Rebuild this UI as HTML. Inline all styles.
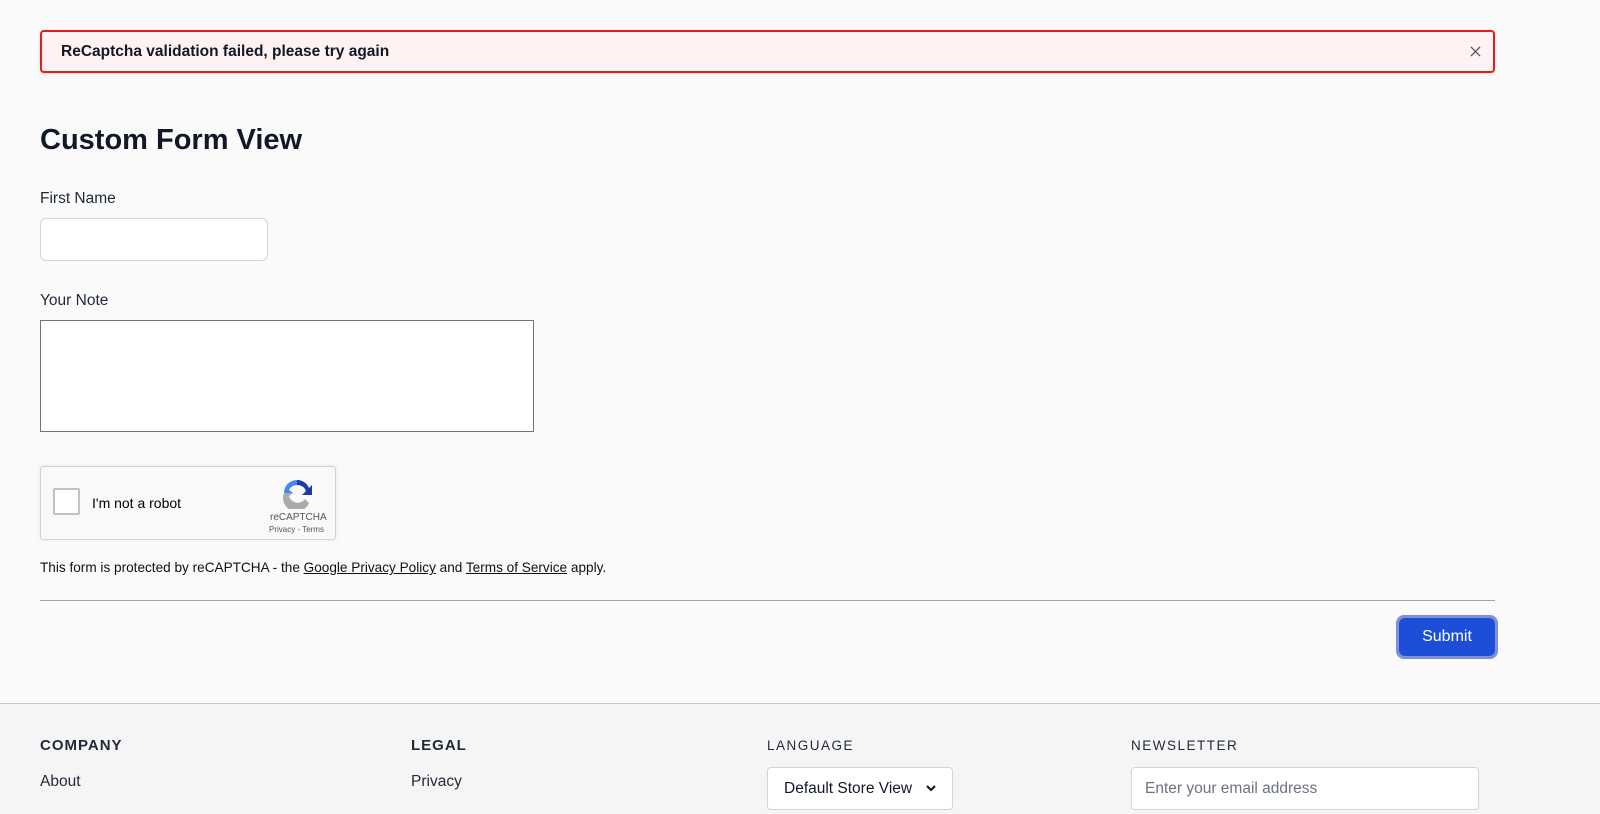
<!DOCTYPE html>
<html><head><meta charset="utf-8"><style>
*{box-sizing:border-box;margin:0;padding:0}
body{width:1600px;height:814px;overflow:hidden;background:#fafafa;font-family:"Liberation Sans",sans-serif;color:#111827;position:relative}
.a{position:absolute}
</style></head><body>
<div class="a" style="left:40px;top:30px;width:1455px;height:43px;background:#fef2f2;border:2px solid #e11d1d;border-radius:4px;box-shadow:0 1px 3px rgba(0,0,0,.15)"></div>
<div class="a" style="left:61px;top:43px;font-size:15.5px;font-weight:bold">ReCaptcha validation failed, please try again</div>
<svg class="a" style="left:1470px;top:46px" width="11" height="11" viewBox="0 0 12 12"><path d="M1 1L11 11M11 1L1 11" stroke="#4b5563" stroke-width="1.4"/></svg>
<div class="a" style="left:40px;top:124px;font-size:29px;font-weight:bold">Custom Form View</div>
<div class="a" style="left:40px;top:190px;font-size:15.5px;color:#1f2937">First Name</div>
<div class="a" style="left:40px;top:218px;width:228px;height:43px;background:#fff;border:1px solid #d1d5db;border-radius:6px"></div>
<div class="a" style="left:40px;top:292px;font-size:15.5px;color:#1f2937">Your Note</div>
<div class="a" style="left:40px;top:320px;width:494px;height:112px;background:#fff;border:1px solid #6b7280"></div>
<div class="a" style="left:40px;top:466px;width:296px;height:74px;background:#f9f9f9;border:1px solid #d3d3d3;border-radius:3px;box-shadow:0 0 4px rgba(0,0,0,.08)"></div>
<div class="a" style="left:53px;top:488px;width:27px;height:27px;background:#fff;border:2px solid #c1c1c1;border-radius:2px"></div>
<div class="a" style="left:92px;top:495px;font-size:14px;color:#000">I'm not a robot</div>
<svg class="a" style="left:281px;top:477px" width="32" height="32" viewBox="0 0 32 32"><path d="M16 3A13 13 0 0 1 28 11L31 8V18H21L25 14A9 9 0 0 0 16 8Z" fill="#1c3aa9"/><path d="M3 16A13 13 0 0 1 16 3V8A9 9 0 0 0 8 13L12 16H3Z" fill="#4285f4"/><path d="M3 16H12L8 19A9 9 0 0 0 24 22L28 26A13 13 0 0 1 3 16Z" fill="#ababab"/></svg>
<div class="a" style="left:270px;top:512px;font-size:10px;color:#555">reCAPTCHA</div>
<div class="a" style="left:269px;top:525px;font-size:8px;color:#555">Privacy - Terms</div>
<div class="a" style="left:40px;top:560px;font-size:13.6px;color:#111">This form is protected by reCAPTCHA - the <u>Google Privacy Policy</u> and <u>Terms of Service</u> apply.</div>
<div class="a" style="left:40px;top:600px;width:1455px;height:1px;background:#9ca3af"></div>
<div class="a" style="left:1396px;top:615px;width:102px;height:44px;border-radius:8px;background:#8090d8"></div>
<div class="a" style="left:1399px;top:618px;width:96px;height:38px;border-radius:6px;background:#1d4ed8;color:#fff;font-size:16px;text-align:center;line-height:38px">Submit</div>
<div class="a" style="left:0;top:703px;width:1600px;height:111px;background:#f5f5f5;border-top:1px solid #c8c8c8"></div>
<div class="a" style="left:40px;top:737px;font-size:15px;font-weight:bold;letter-spacing:1px;color:#1f2937">COMPANY</div>
<div class="a" style="left:40px;top:773px;font-size:15.5px;color:#1f2937">About</div>
<div class="a" style="left:411px;top:737px;font-size:15px;font-weight:bold;letter-spacing:1px;color:#1f2937">LEGAL</div>
<div class="a" style="left:411px;top:773px;font-size:15.5px;color:#1f2937">Privacy</div>
<div class="a" style="left:767px;top:738px;font-size:13.5px;letter-spacing:1.5px;color:#1f2937">LANGUAGE</div>
<div class="a" style="left:767px;top:767px;width:186px;height:43px;background:#fff;border:1px solid #d1d5db;border-radius:4px;font-size:15.5px;line-height:41px;padding-left:16px">Default Store View</div>
<svg class="a" style="left:925px;top:784px" width="12" height="8" viewBox="0 0 12 8"><path d="M2 2L6 6L10 2" stroke="#111" stroke-width="2" fill="none"/></svg>
<div class="a" style="left:1131px;top:738px;font-size:13.5px;letter-spacing:1.5px;color:#1f2937">NEWSLETTER</div>
<div class="a" style="left:1131px;top:767px;width:348px;height:43px;background:#fff;border:1px solid #d1d5db;border-radius:4px;font-size:15.5px;line-height:41px;padding-left:13px;color:#6b7280">Enter your email address</div>
</body></html>
